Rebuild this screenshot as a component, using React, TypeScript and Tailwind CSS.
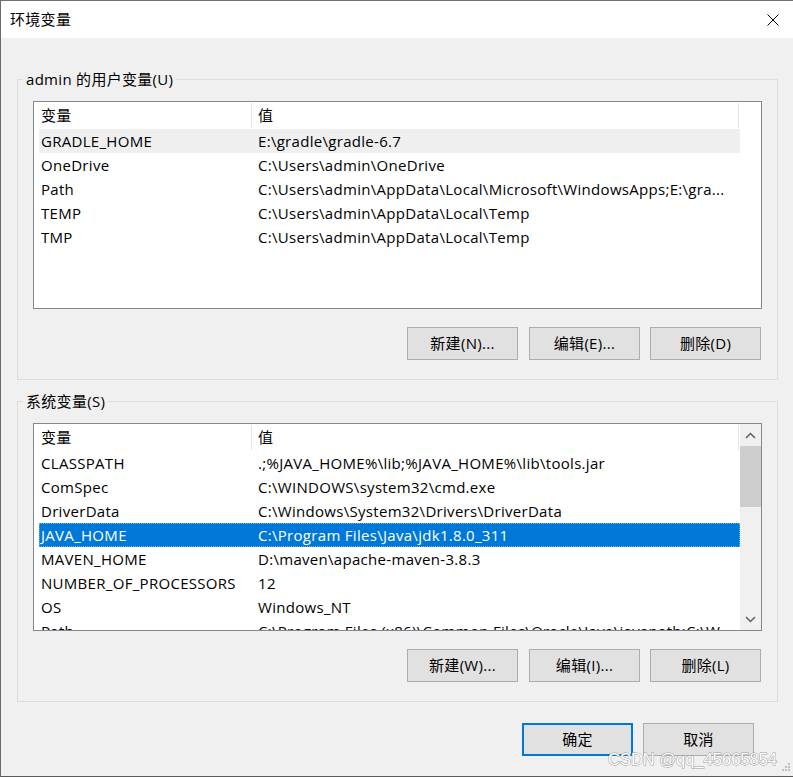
import React from "react";

type Row = { name: string; value: string };

const userRows: Row[] = [
  { name: "GRADLE_HOME", value: "E:\\gradle\\gradle-6.7" },
  { name: "OneDrive", value: "C:\\Users\\admin\\OneDrive" },
  { name: "Path", value: "C:\\Users\\admin\\AppData\\Local\\Microsoft\\WindowsApps;E:\\gra..." },
  { name: "TEMP", value: "C:\\Users\\admin\\AppData\\Local\\Temp" },
  { name: "TMP", value: "C:\\Users\\admin\\AppData\\Local\\Temp" },
];

const sysRows: Row[] = [
  { name: "CLASSPATH", value: ".;%JAVA_HOME%\\lib;%JAVA_HOME%\\lib\\tools.jar" },
  { name: "ComSpec", value: "C:\\WINDOWS\\system32\\cmd.exe" },
  { name: "DriverData", value: "C:\\Windows\\System32\\Drivers\\DriverData" },
  { name: "JAVA_HOME", value: "C:\\Program Files\\Java\\jdk1.8.0_311" },
  { name: "MAVEN_HOME", value: "D:\\maven\\apache-maven-3.8.3" },
  { name: "NUMBER_OF_PROCESSORS", value: "12" },
  { name: "OS", value: "Windows_NT" },
  { name: "Path", value: "C:\\Program Files (x86)\\Common Files\\Oracle\\Java\\javapath;C:\\W..." },
];

function Chevron({ up }: { up: boolean }) {
  return (
    <svg width="11" height="7" viewBox="0 0 11 7">
      <polyline
        points={up ? "1,6 5.5,1.5 10,6" : "1,1 5.5,5.5 10,1"}
        fill="none"
        stroke="#606060"
        strokeWidth="1.5"
      />
    </svg>
  );
}

function VarList({
  rows,
  hoverIndex,
  selectedIndex,
  scroll,
}: {
  rows: Row[];
  hoverIndex?: number;
  selectedIndex?: number;
  scroll?: boolean;
}) {
  return (
    <div className="h-[208px] border border-[#828790] bg-white flex overflow-hidden">
      <div className="w-[706px] pl-[5px] flex flex-col shrink-0">
        <div className="h-[27px] flex shrink-0">
          <div className="w-[212px] pl-[2px] flex items-center">变量</div>
          <div className="w-px h-[25px] mt-[1px] bg-[#e5e5e5]" />
          <div className="w-[486px] pl-[6px] flex items-center">值</div>
          <div className="w-px h-[25px] mt-[1px] bg-[#e5e5e5]" />
        </div>
        {rows.map((r, i) => {
          const sel = i === selectedIndex;
          const hov = i === hoverIndex;
          return (
            <div
              key={i}
              className={
                "h-[24px] w-[701px] flex shrink-0 whitespace-nowrap " +
                (sel
                  ? "bg-[#0078d7] text-white outline-1 outline-dotted outline-[#6fb0ea] -outline-offset-1"
                  : hov
                  ? "bg-[#efefef]"
                  : "")
              }
            >
              <div className="w-[212px] pl-[2px] flex items-center overflow-hidden">{r.name}</div>
              <div className="w-px" />
              <div className="w-[487px] pl-[6px] flex items-center overflow-hidden">{r.value}</div>
            </div>
          );
        })}
      </div>
      {scroll ? (
        <div className="w-[21px] bg-[#f0f0f0] flex flex-col shrink-0">
          <div className="h-[22px] flex items-center justify-center">
            <Chevron up />
          </div>
          <div className="h-[61px] bg-[#cdcdcd]" />
          <div className="flex-1" />
          <div className="h-[22px] flex items-center justify-center">
            <Chevron up={false} />
          </div>
        </div>
      ) : null}
    </div>
  );
}

function Btn({ label, primary, className }: { label: string; primary?: boolean; className?: string }) {
  return (
    <div
      className={
        "w-[111px] h-[33px] bg-[#e1e1e1] flex items-center justify-center " +
        (primary ? "border-2 border-[#0078d7] " : "border border-[#adadad] ") +
        (className ?? "")
      }
    >
      {label}
    </div>
  );
}

function Group({
  title,
  rows,
  hoverIndex,
  selectedIndex,
  scroll,
  buttons,
  className,
}: {
  title: string;
  rows: Row[];
  hoverIndex?: number;
  selectedIndex?: number;
  scroll?: boolean;
  buttons: string[];
  className?: string;
}) {
  return (
    <fieldset className={"w-[761px] border border-[#dcdcdc] px-[5px] pb-[19px] " + (className ?? "")}>
      <legend className="h-[20px] px-[3px] leading-[20px]">{title}</legend>
      <div className="px-[10px] pt-[12px]">
        <VarList rows={rows} hoverIndex={hoverIndex} selectedIndex={selectedIndex} scroll={scroll} />
        <div className="mt-[18px] pr-[1px] flex justify-end">
          <Btn label={buttons[0]} className="mr-[11px]" />
          <Btn label={buttons[1]} className="mr-[10px]" />
          <Btn label={buttons[2]} />
        </div>
      </div>
    </fieldset>
  );
}

export default function App() {
  return (
    <div className="relative w-[793px] h-[777px] flex flex-col border-t border-l border-b border-t-[#707070] border-l-[#6b6b6b] border-b-[#5a5a5a] bg-[#f0f0f0] text-black text-[15px] tracking-[0.3px] font-['Open_Sans','Noto_Sans_CJK_SC',sans-serif] overflow-hidden">
      <div className="h-[37px] bg-white flex items-center justify-between pl-[9px] pr-[14px] shrink-0">
        <span>环境变量</span>
        <svg width="12" height="12" viewBox="0 0 12 12">
          <path d="M0.5 0.5 L11.5 11.5 M11.5 0.5 L0.5 11.5" stroke="#000" strokeWidth="1" fill="none" />
        </svg>
      </div>
      <div className="flex-1 pl-[16px] pt-[31px] flex flex-col">
        <Group
          title="admin 的用户变量(U)"
          rows={userRows}
          hoverIndex={0}
          buttons={["新建(N)...", "编辑(E)...", "删除(D)"]}
        />
        <Group
          title="系统变量(S)"
          rows={sysRows}
          selectedIndex={3}
          scroll
          buttons={["新建(W)...", "编辑(I)...", "删除(L)"]}
          className="mt-[11px]"
        />
        <div className="mt-[21px] w-[761px] pr-[24px] flex justify-end">
          <Btn label="确定" primary className="mr-[10px]" />
          <Btn label="取消" />
        </div>
      </div>
      <div className="absolute left-[607px] top-[746px] text-[16.5px] tracking-normal font-['Liberation_Sans',sans-serif] text-white [-webkit-text-stroke:1px_#9a9a9a] [paint-order:stroke_fill]">
        CSDN @qq_45665854
      </div>
      <svg className="absolute right-[2px] bottom-[4px]" width="9" height="9" viewBox="0 0 9 9">
        <rect x="6" y="0" width="2" height="2" fill="#c0c0c0" />
        <rect x="3" y="3" width="2" height="2" fill="#c0c0c0" />
        <rect x="6" y="3" width="2" height="2" fill="#c0c0c0" />
        <rect x="0" y="6" width="2" height="2" fill="#c0c0c0" />
        <rect x="3" y="6" width="2" height="2" fill="#c0c0c0" />
        <rect x="6" y="6" width="2" height="2" fill="#c0c0c0" />
      </svg>
    </div>
  );
}
